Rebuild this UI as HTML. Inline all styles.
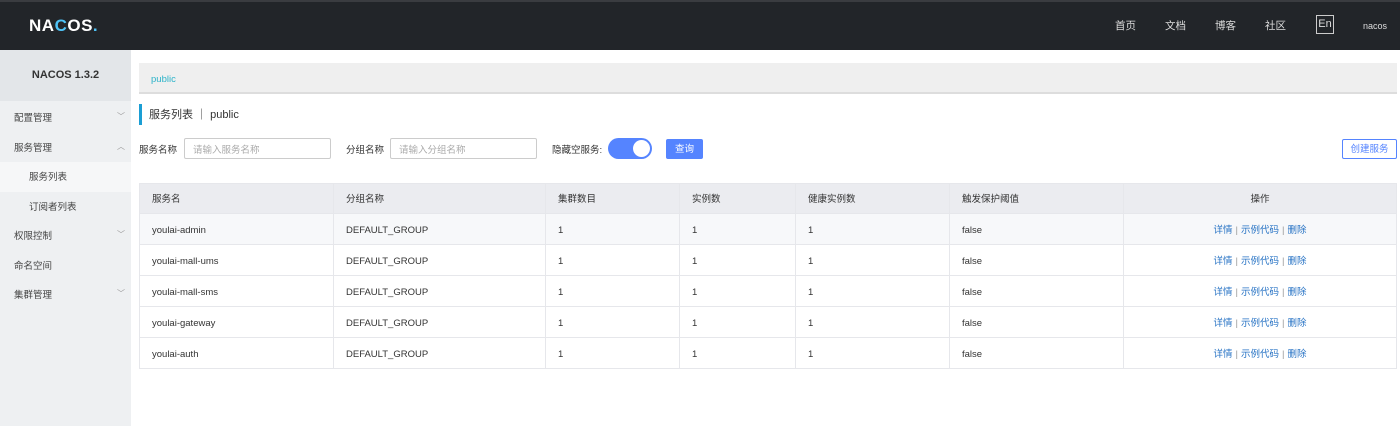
<!DOCTYPE html><html><head><meta charset="utf-8"><style>
*{margin:0;padding:0;box-sizing:border-box}
body{width:1400px;height:426px;overflow:hidden;background:#fff;font-family:"Liberation Sans","Noto Sans CJK SC",sans-serif;font-size:9.5px;color:#333;position:relative;line-height:1.2}
.top{position:absolute;left:0;top:0;width:1400px;height:50px;background:#222529;border-top:2px solid #3a3c40}
.logo{position:absolute;left:29px;top:14px;color:#fff;font-size:17px;font-weight:bold;letter-spacing:0.5px}
.nav{position:absolute;top:18px;color:#ddd;font-size:10.5px;line-height:12px}
.en{position:absolute;left:1316px;top:13px;width:18px;height:19px;border:1px solid #ccc;color:#ddd;font-size:11px;text-align:center;line-height:17px}
.side{position:absolute;left:0;top:50px;width:131px;height:376px;background:#eef0f2}
.sideh{height:51px;background:#e3e6e9;text-align:center;line-height:51px;font-weight:bold;font-size:11px;color:#333}
.mi{position:absolute;left:14px;font-size:9.5px;color:#444;line-height:12px}
.ch{position:absolute;left:117px;font-size:8px;color:#999;line-height:10px}
.sel{position:absolute;left:0;top:112px;width:131px;height:30px;background:#f6f7f8}
.bc{position:absolute;left:139px;top:63px;width:1258px;height:31px;background:#efefef;border-bottom:2px solid #ddd;color:#2cb3c9;padding:11px 0 0 12px;font-size:9.5px}
.title{position:absolute;left:139px;top:104px;height:21px;border-left:3px solid #1b9ed4;padding-left:7px;line-height:23px;font-size:11px;color:#333}
.lbl{position:absolute;top:145px;font-size:9.5px;color:#333}
.inp{position:absolute;top:138px;height:21px;border:1px solid #ccc;border-radius:2px;color:#aaa;padding:6px 8px 0;font-size:9.5px}
.tog{position:absolute;left:608px;top:138px;width:44px;height:21px;border-radius:11px;background:#5584ff}
.tog i{position:absolute;right:2px;top:2px;width:17px;height:17px;border-radius:50%;background:#fff}
.btn{position:absolute;left:666px;top:139px;width:37px;height:20px;background:#5584ff;color:#fff;text-align:center;line-height:22px;border-radius:2px}
.cb{position:absolute;left:1342px;top:139px;width:55px;height:20px;border:1px solid #5584ff;color:#5584ff;text-align:center;line-height:20px;border-radius:2px}
table{position:absolute;left:139px;top:183px;width:1258px;border-collapse:collapse;font-size:9.5px}
td,th{border:1px solid #e6e7eb;height:31px;padding:3px 0 0 12px;text-align:left;font-weight:normal;color:#333}
th{background:#ebecf0;height:30px}
tr.h td{background:#f7f8fa}
.op{text-align:center;padding:3px 0 0;color:#2672c4}
.op span{color:#999;margin:0 3px}
</style></head><body>
<div class="top"><div class="logo">NA<span style="color:#4fc3f7">C</span>OS<span style="color:#4fc3f7">.</span></div>
<div class="nav" style="left:1115px">首页</div><div class="nav" style="left:1165px">文档</div><div class="nav" style="left:1215px">博客</div><div class="nav" style="left:1265px">社区</div>
<div class="en">En</div><div class="nav" style="left:1363px;font-size:9px">nacos</div></div>
<div class="side"><div class="sideh">NACOS 1.3.2</div>
<div class="sel"></div>
<div class="mi" style="top:63px">配置管理</div><div class="ch" style="top:62px">﹀</div>
<div class="mi" style="top:93px">服务管理</div><div class="ch" style="top:92px">︿</div>
<div class="mi" style="top:122px;left:29px">服务列表</div>
<div class="mi" style="top:152px;left:29px">订阅者列表</div>
<div class="mi" style="top:181px">权限控制</div><div class="ch" style="top:180px">﹀</div>
<div class="mi" style="top:211px">命名空间</div>
<div class="mi" style="top:240px">集群管理</div><div class="ch" style="top:239px">﹀</div>
</div>
<div class="bc">public</div>
<div class="title">服务列表 ｜ public</div>
<div class="lbl" style="left:139px">服务名称</div><div class="inp" style="left:184px;width:147px">请输入服务名称</div>
<div class="lbl" style="left:346px">分组名称</div><div class="inp" style="left:390px;width:147px">请输入分组名称</div>
<div class="lbl" style="left:552px">隐藏空服务:</div><div class="tog"><i></i></div>
<div class="btn">查询</div><div class="cb">创建服务</div>
<table>
<tr><th style="width:194px">服务名</th><th style="width:212px">分组名称</th><th style="width:134px">集群数目</th><th style="width:116px">实例数</th><th style="width:154px">健康实例数</th><th style="width:174px">触发保护阈值</th><th style="text-align:center;padding:3px 0 0">操作</th></tr>
<tr class="h"><td>youlai-admin</td><td>DEFAULT_GROUP</td><td>1</td><td>1</td><td>1</td><td>false</td><td class="op">详情<span>|</span>示例代码<span>|</span>删除</td></tr>
<tr><td>youlai-mall-ums</td><td>DEFAULT_GROUP</td><td>1</td><td>1</td><td>1</td><td>false</td><td class="op">详情<span>|</span>示例代码<span>|</span>删除</td></tr>
<tr><td>youlai-mall-sms</td><td>DEFAULT_GROUP</td><td>1</td><td>1</td><td>1</td><td>false</td><td class="op">详情<span>|</span>示例代码<span>|</span>删除</td></tr>
<tr><td>youlai-gateway</td><td>DEFAULT_GROUP</td><td>1</td><td>1</td><td>1</td><td>false</td><td class="op">详情<span>|</span>示例代码<span>|</span>删除</td></tr>
<tr><td>youlai-auth</td><td>DEFAULT_GROUP</td><td>1</td><td>1</td><td>1</td><td>false</td><td class="op">详情<span>|</span>示例代码<span>|</span>删除</td></tr>
</table>
</body></html>
